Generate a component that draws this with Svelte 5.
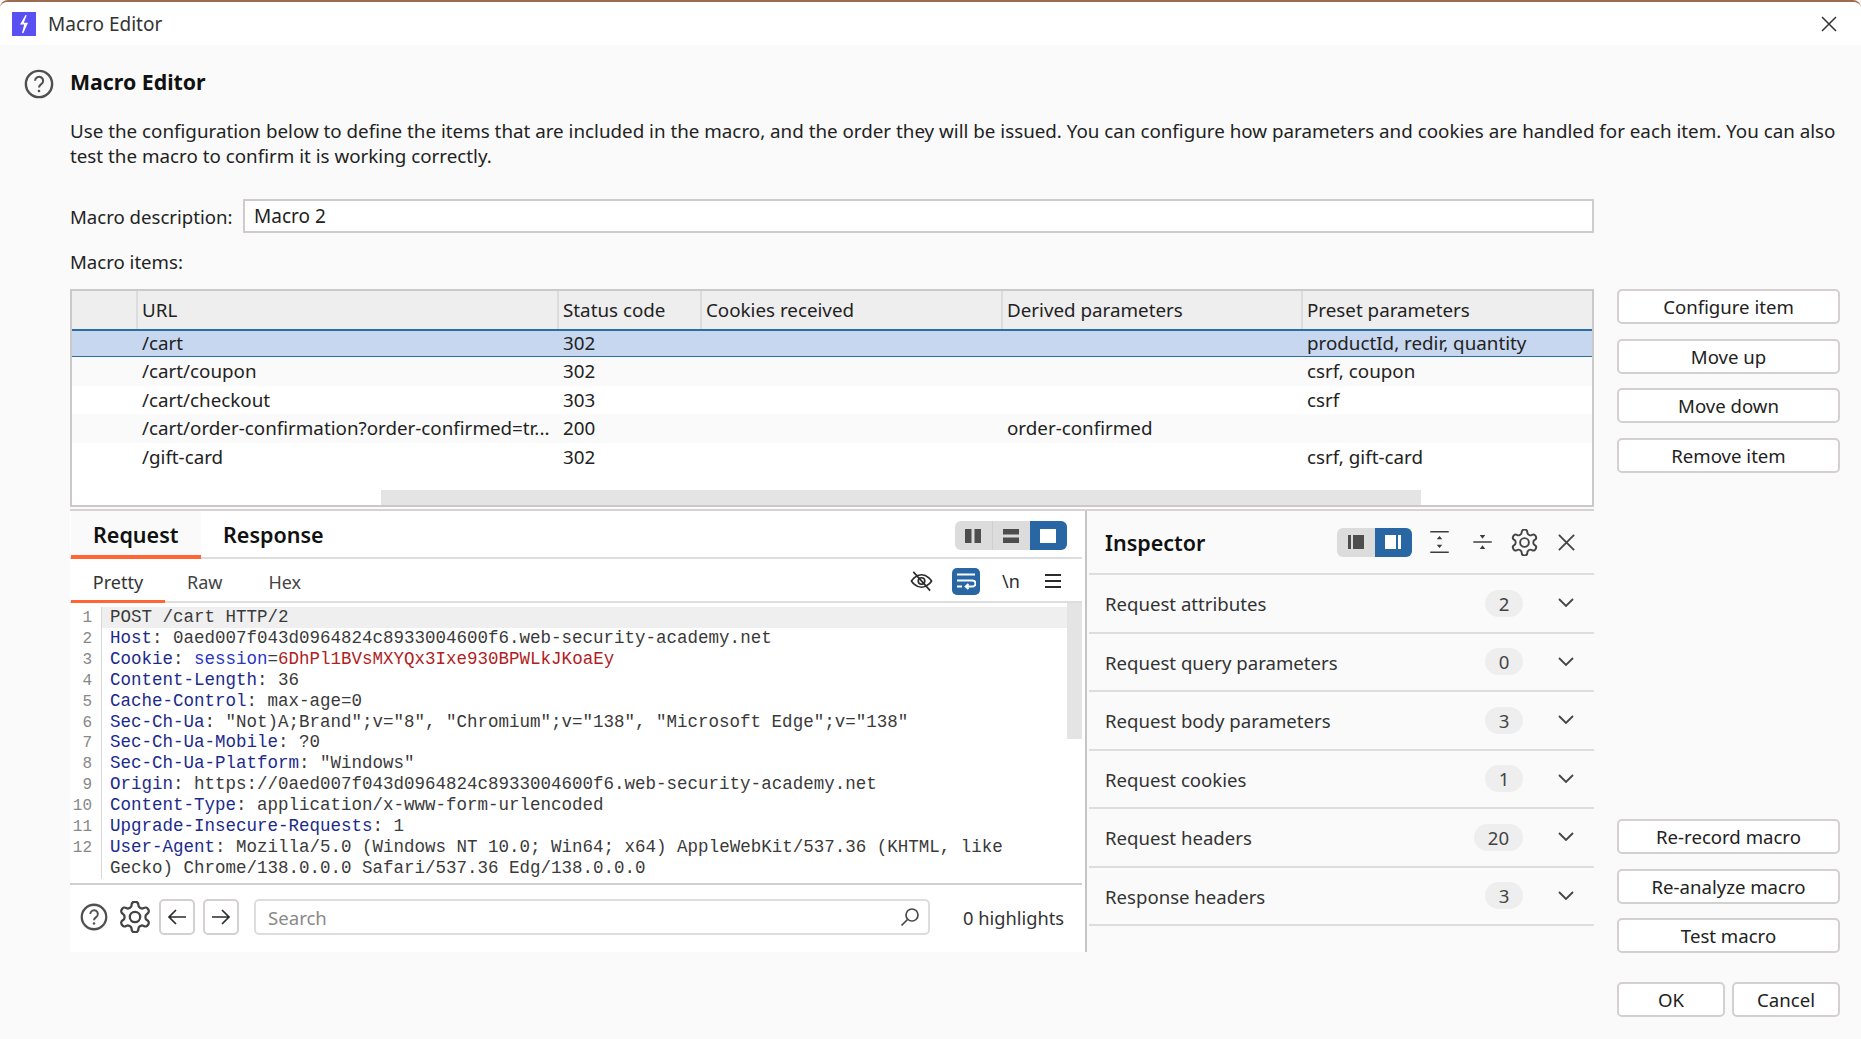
<script>
  const rows = [
    ['/cart', '302', '', '', 'productId, redir, quantity'],
    ['/cart/coupon', '302', '', '', 'csrf, coupon'],
    ['/cart/checkout', '303', '', '', 'csrf'],
    ['/cart/order-confirmation?order-confirmed=tr...', '200', '', 'order-confirmed', ''],
    ['/gift-card', '302', '', '', 'csrf, gift-card']
  ];
  const heads = ['', 'URL', 'Status code', 'Cookies received', 'Derived parameters', 'Preset parameters'];
  const sections = [
    ['Request attributes', 2], ['Request query parameters', 0], ['Request body parameters', 3],
    ['Request cookies', 1], ['Request headers', 20], ['Response headers', 3]
  ];
  const lines = [
    { v: 'POST /cart HTTP/2', n: 1, first: true },
    { k: 'Host', v: ' 0aed007f043d0964824c8933004600f6.web-security-academy.net', n: 2 },
    { k: 'Cookie', s: 'session', c: '6DhPl1BVsMXYQx3Ixe930BPWLkJKoaEy', n: 3 },
    { k: 'Content-Length', v: ' 36', n: 4 },
    { k: 'Cache-Control', v: ' max-age=0', n: 5 },
    { k: 'Sec-Ch-Ua', v: ' "Not)A;Brand";v="8", "Chromium";v="138", "Microsoft Edge";v="138"', n: 6 },
    { k: 'Sec-Ch-Ua-Mobile', v: ' ?0', n: 7 },
    { k: 'Sec-Ch-Ua-Platform', v: ' "Windows"', n: 8 },
    { k: 'Origin', v: ' https://0aed007f043d0964824c8933004600f6.web-security-academy.net', n: 9 },
    { k: 'Content-Type', v: ' application/x-www-form-urlencoded', n: 10 },
    { k: 'Upgrade-Insecure-Requests', v: ' 1', n: 11 },
    { k: 'User-Agent', v: ' Mozilla/5.0 (Windows NT 10.0; Win64; x64) AppleWebKit/537.36 (KHTML, like Gecko) Chrome/138.0.0.0 Safari/537.36 Edg/138.0.0.0', n: 12 }
  ];
  const gear = 'M12.22 2h-.44a2 2 0 0 0-2 2v.18a2 2 0 0 1-1 1.73l-.43.25a2 2 0 0 1-2 0l-.15-.08a2 2 0 0 0-2.73.73l-.22.38a2 2 0 0 0 .73 2.73l.15.1a2 2 0 0 1 1 1.72v.51a2 2 0 0 1-1 1.74l-.15.09a2 2 0 0 0-.73 2.73l.22.38a2 2 0 0 0 2.73.73l.15-.08a2 2 0 0 1 2 0l.43.25a2 2 0 0 1 1 1.73V20a2 2 0 0 0 2 2h.44a2 2 0 0 0 2-2v-.18a2 2 0 0 1 1-1.73l.43-.25a2 2 0 0 1 2 0l.15.08a2 2 0 0 0 2.73-.73l.22-.39a2 2 0 0 0-.73-2.73l-.15-.08a2 2 0 0 1-1-1.74v-.5a2 2 0 0 1 1-1.74l.15-.09a2 2 0 0 0 .73-2.73l-.22-.38a2 2 0 0 0-2.73-.73l-.15.08a2 2 0 0 1-2 0l-.43-.25a2 2 0 0 1-1-1.73V4a2 2 0 0 0-2-2z';
</script>

{#snippet help(size)}
  <svg class="ic" width={size} height={size} viewBox="0 0 32 32" fill="none" stroke="#505050" stroke-width="2.6">
    <circle cx="16" cy="16" r="14" />
    <path d="M11.8 12.600a4.300 4.300 0 1 1 6.600 3.600c-1.500 1-2.400 1.800-2.400 3.600" stroke-width="2.200" />
    <circle cx="16" cy="23.400" r="1.400" fill="#505050" stroke="none" />
  </svg>
{/snippet}

{#snippet gearIcon(size)}
  <svg class="ic" width={size} height={size} viewBox="1.500 1.500 21 21" fill="none" stroke="#444" stroke-width="1.500">
    <path d={gear} /><circle cx="12" cy="12" r="3.400" />
  </svg>
{/snippet}

<div class="window">
  <header class="titlebar">
    <svg class="logo" width="24" height="24" viewBox="0 0 24 24">
      <rect width="24" height="24" fill="#5a4ff3" />
      <path d="M13.500 3 8 12.500h4.200L10 21l1.300.2 4.700-10.400h-4.200L14.700 3.300z" fill="#fff" />
    </svg>
    <span class="wintitle">Macro Editor</span>
    <svg class="close" width="16" height="16" viewBox="0 0 16 16" stroke="#333" stroke-width="1.500">
      <path d="M1 1l14 14M15 1 1 15" />
    </svg>
  </header>

  <div class="dialog">
    <div class="gutter">{@render help(30)}</div>
    <div class="content">
      <h1>Macro Editor</h1>
      <p class="desc">Use the configuration below to define the items that are included in the macro, and the order they will be issued. You can configure how parameters and cookies are handled for each item. You can also test the macro to confirm it is working correctly.</p>

      <div class="work">
        <main>
          <div class="descrow">
            <span class="desclabel">Macro description:</span>
            <div class="field">Macro 2</div>
          </div>
          <div class="itemslabel">Macro items:</div>

          <div class="table">
            <div class="tr head">
              {#each heads as h}<div class="td">{h}</div>{/each}
            </div>
            {#each rows as r, i}
              <div class="tr" class:sel={i === 0} class:alt={i % 2 === 1}>
                <div class="td"></div>
                {#each r as c}<div class="td">{c}</div>{/each}
              </div>
            {/each}
            <div class="hscroll"><div class="hthumb"></div></div>
          </div>

          <section class="panel">
            <div class="left">
              <div class="tabs">
                <div class="tab active">Request</div>
                <div class="tab">Response</div>
                <div class="seg layout">
                  <span class="segbtn">
                    <svg width="16" height="14" viewBox="0 0 16 14" fill="#4d4d4d"><rect x="0" y="0" width="6.500" height="14" /><rect x="9.500" y="0" width="6.500" height="14" /></svg>
                  </span>
                  <span class="segbtn">
                    <svg width="16" height="14" viewBox="0 0 16 14" fill="#4d4d4d"><rect x="0" y="0" width="16" height="5.500" /><rect x="0" y="8.500" width="16" height="5.500" /></svg>
                  </span>
                  <span class="segbtn on">
                    <svg width="16" height="14" viewBox="0 0 16 14" fill="#fff"><rect width="16" height="14" /></svg>
                  </span>
                </div>
              </div>

              <div class="subtabs">
                <div class="sub active">Pretty</div>
                <div class="sub">Raw</div>
                <div class="sub">Hex</div>
                <div class="tools">
                  <svg width="23" height="24" viewBox="0 0 24 24" fill="none" stroke="#2b2b2b" stroke-width="1.700">
                    <path d="M1.500 12S5.500 5.500 12 5.500 22.500 12 22.500 12 18.500 18.500 12 18.500 1.500 12 1.500 12z" /><circle cx="12" cy="12" r="3.400" /><path d="M3.500 2.500 21 22" />
                  </svg>
                  <span class="wrapbtn">
                    <svg width="20" height="18" viewBox="0 0 20 18" fill="none" stroke="#fff" stroke-width="2">
                      <path d="M1 2.500h18M1 8.500h15.500a2.800 2.800 0 0 1 0 6H10M12.500 12l-2.800 2.500 2.800 2.500M1 14.500h5" />
                    </svg>
                  </span>
                  <span class="nl">\n</span>
                  <svg class="burger" width="16" height="16" viewBox="0 0 16 16" stroke="#2b2b2b" stroke-width="1.800"><path d="M0 2h16M0 8h16M0 14h16" /></svg>
                </div>
              </div>

              <div class="code">
                <div class="lines">
                  {#each lines as l}
                    <div class="line" class:first={l.first}>
                      <span class="num">{l.n}</span>
                      <span class="txt">{#if l.k}<span class="k">{l.k}</span><span class="p">:</span>{/if}{#if l.s}{' '}<span class="s">{l.s}</span><span class="p">=</span><span class="c">{l.c}</span>{/if}{#if l.v}{l.v}{/if}</span>
                    </div>
                  {/each}
                </div>
                <div class="vscroll"><div class="vthumb"></div></div>
              </div>

              <div class="searchbar">
                {@render help(28)}
                {@render gearIcon(32)}
                <span class="navbtn">
                  <svg width="20" height="18" viewBox="0 0 20 18" fill="none" stroke="#2b2b2b" stroke-width="1.700"><path d="M19 9H2M9 2 2 9l7 7" /></svg>
                </span>
                <span class="navbtn">
                  <svg width="20" height="18" viewBox="0 0 20 18" fill="none" stroke="#2b2b2b" stroke-width="1.700"><path d="M1 9h17M11 2l7 7-7 7" /></svg>
                </span>
                <div class="search">
                  <span>Search</span>
                  <svg width="20" height="20" viewBox="0 0 20 20" fill="none" stroke="#4a4a4a" stroke-width="1.700"><circle cx="12" cy="8" r="6" /><path d="M7.500 12.500 1.500 18.500" /></svg>
                </div>
                <span class="hl">0 highlights</span>
              </div>
            </div>

            <aside class="inspector">
              <div class="insphead">
                <span class="insptitle">Inspector</span>
                <div class="seg insp">
                  <span class="segbtn">
                    <svg width="16" height="14" viewBox="0 0 16 14" fill="#4d4d4d"><rect x="0" y="0" width="3" height="14" /><rect x="5" y="0" width="11" height="14" /></svg>
                  </span>
                  <span class="segbtn on">
                    <svg width="16" height="14" viewBox="0 0 16 14" fill="#fff"><rect x="0" y="0" width="11" height="14" /><rect x="13" y="0" width="3" height="14" /></svg>
                  </span>
                </div>
                <svg class="i1" width="21" height="24" viewBox="0 0 22 26" fill="none" stroke="#3c3c3c" stroke-width="1.600">
                  <path d="M1 2h20M1 24h20" /><path d="M11 6.500 14 10H8zM11 19.500 8 16h6z" fill="#3c3c3c" stroke="none" />
                </svg>
                <svg class="i2" width="21" height="24" viewBox="0 0 22 26" fill="none" stroke="#3c3c3c" stroke-width="1.600">
                  <path d="M1 13h20" /><path d="M11 9.500 8 5.500h6zM11 16.500 14 20.500H8z" fill="#3c3c3c" stroke="none" />
                </svg>
                {@render gearIcon(27)}
                <svg class="i3" width="19" height="19" viewBox="0 0 20 20" stroke="#444" stroke-width="1.900"><path d="M2 2l16 16M18 2 2 18" /></svg>
              </div>
              {#each sections as s}
                <div class="section">
                  <span class="sname">{s[0]}</span>
                  <span class="pill" class:wide={s[1] > 9}>{s[1]}</span>
                  <svg width="16" height="10" viewBox="0 0 16 10" fill="none" stroke="#444" stroke-width="1.800"><path d="M1 1l7 7 7-7" /></svg>
                </div>
              {/each}
            </aside>
          </section>
        </main>

        <div class="side">
          <div class="group">
            <button>Configure item</button>
            <button>Move up</button>
            <button>Move down</button>
            <button>Remove item</button>
          </div>
          <div class="group lower">
            <button>Re-record macro</button>
            <button>Re-analyze macro</button>
            <button>Test macro</button>
          </div>
          <div class="okrow">
            <button>OK</button>
            <button>Cancel</button>
          </div>
        </div>
      </div>
    </div>
  </div>
</div>

<style>
  :global(body) { margin: 0; background: #fafafa; }
  .window {
    width: 1861px; height: 1039px; overflow: hidden; box-sizing: border-box;
    background: #fafafa; color: #222;
    font-family: "Noto Sans", "Open Sans", sans-serif; font-size: 18.6px;
    border-top: 2px solid #9b6d50; border-radius: 8px 8px 0 0;
  }
  .ic { display: block; flex: none; }
  .titlebar {
    height: 43px; background: #fff; display: flex; align-items: center; padding: 0 24px 0 12px;
  }
  .logo { display: block; }
  .wintitle { margin-left: 12px; font-size: 19px; color: #333; }
  .close { margin-left: auto; }
  .dialog { display: flex; }
  .gutter { width: 70px; box-sizing: border-box; padding: 24px 0 0 24px; }
  .content { width: 1770px; }
  h1 { margin: 22px 0 0; font-size: 21.3px; line-height: 30px; font-weight: 700; color: #111; }
  .desc { margin: 22px 0 0; line-height: 25px; color: #222; font-size: 18.8px; }
  .work { margin-top: 30px; display: grid; grid-template-columns: 1524px 223px; column-gap: 23px; }
  .descrow { display: flex; align-items: center; height: 34px; }
  .desclabel { width: 173px; flex: none; white-space: nowrap; }
  .field {
    flex: none; width: 1351px; height: 34px; box-sizing: border-box; background: #fff;
    border: 2px solid #cfcbcb; padding: 0 9px; line-height: 31px; font-size: 19px;
  }
  .itemslabel { margin-top: 17px; line-height: 24px; }
  .table {
    margin-top: 15px; height: 218px; box-sizing: border-box; background: #fff;
    border: 2px solid #cbc8c8; position: relative; font-size: 18.8px;
  }
  .tr {
    display: grid; grid-template-columns: 66px 421px 143px 301px 300px 1fr;
    height: 28.5px; line-height: 28px; background: #fff;
  }
  .tr.alt { background: #fafafa; }
  .td { padding-left: 4px; white-space: nowrap; overflow: hidden; }
  .head { height: 38px; line-height: 38px; background: #eee; }
  .head .td { border-right: 2px solid #dcdcdc; box-sizing: border-box; }
  .head .td:last-child { border-right: 0; }
  .tr.sel {
    height: 28px; line-height: 24px; background: #c6d7ef;
    border-top: 2px solid #2e6ca4; border-bottom: 1px solid #2e6ca4; box-sizing: border-box;
  }
  .hscroll { position: absolute; left: 0; right: 0; bottom: 0; height: 15px; }
  .hthumb { position: absolute; left: 309px; width: 1040px; top: 0; bottom: 0; background: #e4e4e4; }

  .panel {
    margin-top: 2px; height: 443px; display: flex; background: #fff;
    border-top: 2px solid #d6d2d2; box-sizing: border-box;
  }
  .left { width: 1017px; flex: none; box-sizing: border-box; padding-right: 3px; border-right: 2px solid #c4c4c4; display: flex; flex-direction: column; }
  .tabs { height: 48px; flex: none; display: flex; align-items: stretch; border-bottom: 2px solid #ddd; box-sizing: border-box; padding-left: 1px; }
  .tab {
    padding: 0 22px; font-size: 21.500px; font-weight: 600; line-height: 47px; color: #111;
    margin-bottom: -2px; border-bottom: 4px solid transparent; box-sizing: border-box;
  }
  .tab.active { border-bottom-color: #ff6633; background: #fafafa; width: 130px; }
  .seg { display: flex; height: 29px; border-radius: 6px; overflow: hidden; background: #dcdcdc; }
  .layout { margin: 10px 15px 0 auto; }
  .segbtn { width: 37.500px; display: flex; align-items: center; justify-content: center; border-left: 1px solid #cfcfcf; box-sizing: border-box; }
  .segbtn:first-child { border-left: 0; }
  .segbtn.on { background: #2866a4; border-left: 0; }

  .subtabs { height: 44px; flex: none; display: flex; border-bottom: 2px solid #ddd; box-sizing: border-box; padding-left: 1px; font-size: 18px; }
  .sub { width: 94px; text-align: center; line-height: 46px; margin-bottom: -2px; box-sizing: border-box; border-bottom: 3px solid transparent; color: #444; }
  .sub + .sub { width: auto; padding: 0 0 0 22px; margin-right: 24px; }
  .sub.active { border-bottom-color: #ff6633; color: #333; }
  .tools { margin-left: auto; padding-right: 21px; display: flex; align-items: center; height: 44px; }
  .wrapbtn { margin-left: 19px; width: 28px; height: 27px; background: #2866a4; border-radius: 5px; display: flex; align-items: center; justify-content: center; }
  .nl { margin-left: 22px; width: 16px; font-size: 18px; color: #2b2b2b; line-height: 1; white-space: nowrap; }
  .burger { margin-left: 27px; }

  .code { height: 282px; flex: none; display: flex; border-bottom: 2px solid #cfcfcf; overflow: hidden; box-sizing: border-box; padding-top: 4px; }
  .lines { flex: 1; min-width: 0; font-family: "Liberation Mono", monospace; font-size: 17.5px; line-height: 20.900px; color: #3a3a3a; }
  .line { display: flex; }
  .num {
    width: 32px; flex: none; box-sizing: border-box; padding: 2px 9px 0 0; text-align: right; color: #888; font-size: 16px; line-height: 18.900px;
    border-right: 1px solid #d8d8d8;
  }
  .txt { flex: 1; padding-left: 8px; white-space: pre-wrap; word-break: normal; }
  .first .txt { background: #efefef; }
  .k { color: #1c2a8c; }
  .p { color: #3a3a3a; }
  .s { color: #2a35c4; }
  .c { color: #b01e1e; }
  .vscroll { width: 15px; flex: none; margin-top: -4px; }
  .vthumb { height: 136px; background: #e4e4e4; }

  .searchbar { flex: 1; display: flex; align-items: center; padding: 0 0 3px 10px; box-sizing: border-box; }
  .searchbar > :global(.ic:nth-child(2)) { margin-left: 11px; }
  .navbtn {
    width: 36px; height: 36px; box-sizing: border-box; border: 2px solid #d4d0d0; border-radius: 5px; background: #fff;
    display: flex; align-items: center; justify-content: center; margin-left: 8px; flex: none;
  }
  .search {
    margin-left: 15px; width: 676px; height: 36px; box-sizing: border-box; border: 2px solid #ddd; border-radius: 5px; flex: none;
    display: flex; align-items: center; justify-content: space-between; padding: 0 8px 0 12px; color: #8a8a8a; background: #fff;
  }
  .hl { margin-left: 33px; color: #333; white-space: nowrap; font-size: 18.300px; }

  .inspector { flex: 1; background: #fafafa; padding-left: 2px; }
  .insphead { height: 64px; display: flex; align-items: center; border-bottom: 2px solid #ddd; box-sizing: border-box; padding: 0 18px 0 16px; }
  .insptitle { font-size: 21.500px; font-weight: 600; color: #111; }
  .insp { margin-left: auto; }
  .i1 { margin-left: 17px; }
  .i2 { margin-left: 22px; }
  .insphead > :global(.ic) { margin-left: 18px; }
  .i3 { margin-left: 19px; }
  .section { height: 58.500px; display: flex; align-items: center; border-bottom: 2px solid #ddd; box-sizing: border-box; padding: 0 20px 0 16px; color: #333; }
  .sname { flex: 1; padding-top: 1px; }
  .pill { width: 38px; height: 27px; border-radius: 14px; background: #eee; text-align: center; line-height: 27px; color: #444; margin-right: 35px; }
  .pill.wide { width: 49px; }
  .side { display: flex; flex-direction: column; padding-top: 90px; height: 818px; box-sizing: border-box; }
  .group { display: flex; flex-direction: column; gap: 14.500px; }
  .group.lower { margin-top: auto; }
  .okrow { margin-top: 29px; display: flex; justify-content: space-between; }
  .okrow button { width: 108px; }
  button {
    height: 35px; box-sizing: border-box; background: #fff; border: 2px solid #d4d0d0; border-radius: 5px;
    font: inherit; color: #222; padding: 0; line-height: 29px; display: block; width: 100%;
  }
</style>
